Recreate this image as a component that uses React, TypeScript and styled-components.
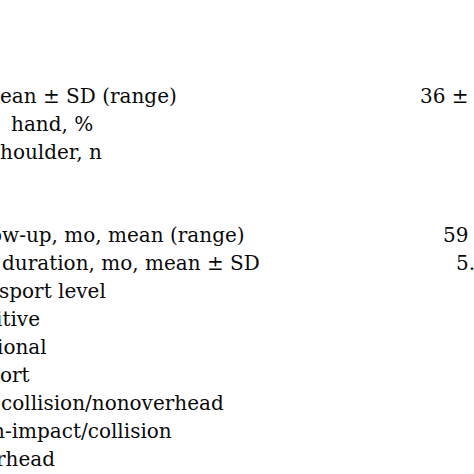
import styled, { createGlobalStyle } from "styled-components";

const Global = createGlobalStyle`
  html, body {
    margin: 0;
    padding: 0;
    background: #ffffff;
    overflow: hidden;
  }
`;

const Sheet = styled.div`
  width: 474px;
  height: 474px;
  overflow: hidden;
  padding-top: 83px;
  box-sizing: border-box;
  font-family: "DejaVu Serif", "Liberation Serif", serif;
  font-size: 20px;
  color: #0a0a0a;
`;

const Row = styled.div`
  display: grid;
  grid-template-columns: 400px 1fr;
  height: 27.9px;
  line-height: 27.9px;
  white-space: nowrap;
`;

const Label = styled.div<{ $shift: number }>`
  margin-left: ${(p) => p.$shift}px;
`;

const Value = styled.div<{ $shift: number }>`
  margin-left: ${(p) => p.$shift}px;
`;

type Line = { label: string; shift: number; value?: string; vshift?: number };

const lines: Line[] = [
  { label: "mean ± SD (range)", shift: -19, value: "36 ± 6 (24–49)", vshift: 20 },
  { label: "hand, %", shift: 11 },
  { label: "houlder, n", shift: 0 },
  { label: "", shift: 0 },
  { label: "", shift: 0 },
  { label: "ow-up, mo, mean (range)", shift: -10, value: "59 (24–120)", vshift: 43 },
  { label: "duration, mo, mean ± SD", shift: 2, value: "5.2 ± 3.1", vshift: 56 },
  { label: "sport level", shift: -1 },
  { label: "itive", shift: -4 },
  { label: "ional", shift: -3 },
  { label: "ort", shift: 0 },
  { label: "collision/nonoverhead", shift: 1 },
  { label: "h-impact/collision", shift: -8 },
  { label: "rhead", shift: -4 },
];

export default function App() {
  return (
    <>
      <Global />
      <Sheet>
        {lines.map((l, i) => (
          <Row key={i}>
            <Label $shift={l.shift}>{l.label}</Label>
            <Value $shift={l.vshift ?? 0}>{l.value ?? ""}</Value>
          </Row>
        ))}
      </Sheet>
    </>
  );
}
